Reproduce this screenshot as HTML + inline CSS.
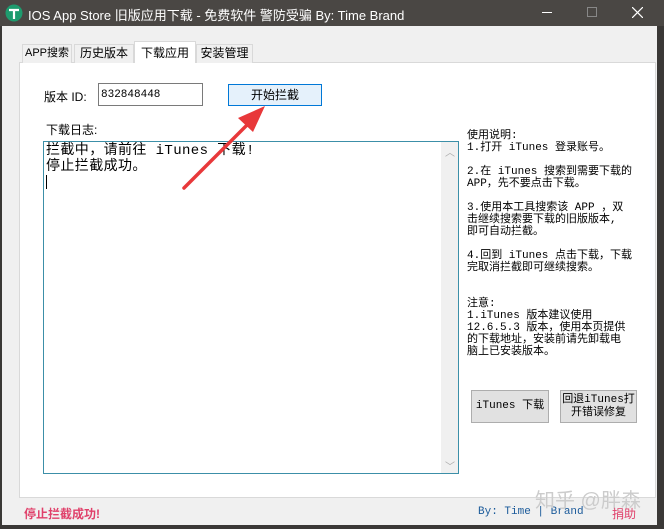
<!DOCTYPE html>
<html><head><meta charset="utf-8"><style>
*{margin:0;padding:0;box-sizing:border-box}
body{width:664px;height:529px;background:#3a3836;position:relative;overflow:hidden;font-family:"Liberation Sans","Noto Sans CJK SC",sans-serif;font-size:12px;color:#000}
.title{position:absolute;left:0;top:0;width:664px;height:26px;background:#4a4744;color:#fff;font-size:13px}
.win{position:absolute;left:2px;top:26px;width:655px;height:499px;background:#f0f0f0}
.abs{position:absolute}
.tab{position:absolute;top:44px;height:19px;border:1px solid #d9d9d9;border-bottom:none;background:#f0f0f0;font-size:12px;line-height:17px;text-align:center}
.panel{position:absolute;left:19px;top:62px;width:637px;height:436px;background:#fff;border:1px solid #d9d9d9}
.btn{position:absolute;background:#e1e1e1;border:1px solid #adadad;font-size:12px;text-align:center}
.info{position:absolute;left:467px;font-family:"Liberation Mono","WenQuanYi Zen Hei",monospace;font-size:11px;line-height:12px;letter-spacing:0px}
</style></head><body>
<div class="title">
<svg class="abs" style="left:5px;top:4px" width="18" height="18"><circle cx="9" cy="9" r="8.5" fill="#1e9b6e"/><path d="M4 6h10M9 6v9" stroke="#fff" stroke-width="2.2"/></svg>
<div class="abs" style="left:28px;top:5px">IOS App Store 旧版应用下载 - 免费软件 警防受骗 By: Time Brand</div>
<div class="abs" style="left:542px;top:12px;width:10px;height:1px;background:#fff"></div>
<div class="abs" style="left:587px;top:7px;width:10px;height:10px;border:1px solid #888"></div>
<svg class="abs" style="left:632px;top:7px" width="11" height="11"><path d="M0 0L11 11M11 0L0 11" stroke="#fff" stroke-width="1.2"/></svg>
</div>
<div class="win"></div>
<div class="panel"></div>
<div class="tab" style="left:22px;width:50px;font-size:11px">APP搜索</div>
<div class="tab" style="left:74px;width:60px">历史版本</div>
<div class="tab" style="left:134px;width:62px;top:41px;height:22px;background:#fff;border-color:#d9d9d9;line-height:22px">下载应用</div>
<div class="tab" style="left:196px;width:57px">安装管理</div>
<div class="abs" style="left:44px;top:88px">版本 ID:</div>
<div class="abs" style="left:98px;top:83px;width:105px;height:23px;border:1px solid #7a7a7a;background:#fff;font-family:'Liberation Mono',monospace;font-size:11px;padding:5px 2px">832848448</div>
<div class="btn" style="left:228px;top:84px;width:94px;height:22px;background:#e5f1fb;border-color:#0078d7;line-height:20px">开始拦截</div>
<div class="abs" style="left:46px;top:121px">下载日志:</div>
<div class="abs" style="left:43px;top:141px;width:416px;height:333px;border:1px solid #3c8fa8;background:#fff">
<div class="abs" style="left:397px;top:0;width:17px;height:331px;background:#f0f0f0"></div>
<div class="abs" style="left:401px;top:2px;color:#aaa;font-size:10px">︿</div>
<div class="abs" style="left:401px;top:316px;color:#aaa;font-size:10px">﹀</div>
<div class="abs" style="left:2px;top:1px;font-family:'Liberation Mono','WenQuanYi Zen Hei',monospace;font-size:14px;line-height:16px;letter-spacing:0.4px">拦截中，请前往 iTunes 下载!<br>停止拦截成功。<br><span style="display:inline-block;width:1px;height:14px;background:#000"></span></div>
</div>
<svg class="abs" style="left:180px;top:100px" width="90" height="92"><path d="M4 88L72 20" stroke="#e8383a" stroke-width="3.5" stroke-linecap="round"/><path d="M85 6L58 18L73 32Z" fill="#e8383a"/></svg>
<div class="info" style="top:130px">使用说明:<br>1.打开 iTunes 登录账号。<br><br>2.在 iTunes 搜索到需要下载的<br>APP，先不要点击下载。<br><br>3.使用本工具搜索该 APP ，双<br>击继续搜索要下载的旧版版本,<br>即可自动拦截。<br><br>4.回到 iTunes 点击下载，下载<br>完取消拦截即可继续搜索。<br><br><br>注意:<br>1.iTunes 版本建议使用<br>12.6.5.3 版本，使用本页提供<br>的下载地址，安装前请先卸载电<br>脑上已安装版本。</div>
<div class="btn" style="left:471px;top:390px;width:78px;height:33px;line-height:31px;font-family:'Liberation Mono','WenQuanYi Zen Hei',monospace;font-size:11px">iTunes 下载</div>
<div class="btn" style="left:560px;top:390px;width:77px;height:33px;line-height:13px;padding-top:3px;font-family:'Liberation Mono','WenQuanYi Zen Hei',monospace;font-size:11px">回退iTunes打<br>开错误修复</div>
<div class="abs" style="left:24px;top:505px;color:#e0406a;font-weight:bold;font-size:12px">停止拦截成功!</div>
<div class="abs" style="left:478px;top:506px;color:#1a5a9a;font-family:'Liberation Mono',monospace;font-size:11px">By: Time | Brand</div>
<div class="abs" style="left:535px;top:484px;color:#ccc;font-size:20px">知乎 @胖森</div>
<div class="abs" style="left:612px;top:505px;color:#e0406a;font-size:12px">捐助</div>
</body></html>
